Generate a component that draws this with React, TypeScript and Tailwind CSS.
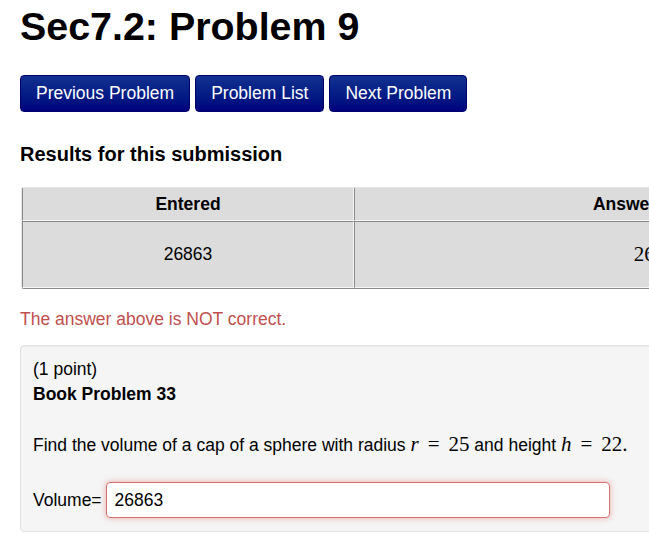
import React from "react";

const NavButton = ({ label }: { label: string }) => (
  <a
    href="#"
    className="flex h-[37px] items-center rounded-[4px] border border-[#00006a] bg-gradient-to-b from-[#14308f] to-[#00007c] px-[15px] text-[17.5px] text-white"
  >
    {label}
  </a>
);

const MathVar = ({ v, n }: { v: string; n: string }) => (
  <span className="font-['Liberation_Serif',serif] text-[21px]">
    <i>{v}</i>
    <span className="mx-[0.43em]">=</span>
    {n}
  </span>
);

export default function App() {
  return (
    <div className="w-full overflow-hidden bg-white text-black font-['Liberation_Sans',Arial,sans-serif]">
      <div className="w-[1000px] pl-5 pt-[5px] pb-4">
        <h1 className="text-[39.4px] font-bold leading-[43px]">Sec7.2: Problem 9</h1>

        <div className="mt-[27px] flex gap-[5px]">
          <NavButton label="Previous Problem" />
          <NavButton label="Problem List" />
          <NavButton label="Next Problem" />
        </div>

        <h2 className="mt-[30px] text-[20px] font-bold leading-[24px]">Results for this submission</h2>

        <table className="ml-px mt-[21px] border-separate border-spacing-0 rounded-[3px] border border-t-[#e4e4e4] border-l-[#e4e4e4] border-r-[#8a8a8a] border-b-[#8a8a8a] text-[17.5px]">
          <thead>
            <tr>
              <th className="h-[33px] w-[332px] border-b border-l border-r border-b-[#f6f6f6] border-l-[#8a8a8a] border-r-[#f6f6f6] bg-[#dcdcdc] p-0 font-bold">
                Entered
              </th>
              <th className="h-[33px] w-[612px] border-b border-l border-r border-b-[#f6f6f6] border-l-[#8a8a8a] border-r-[#f6f6f6] bg-[#dcdcdc] p-0 font-bold">
                Answer Preview
              </th>
            </tr>
          </thead>
          <tbody>
            <tr>
              <td className="h-[67px] border border-t-[#8a8a8a] border-l-[#8a8a8a] border-r-[#f6f6f6] border-b-[#f6f6f6] bg-[#dcdcdc] p-0 text-center">
                26863
              </td>
              <td className="h-[67px] border border-t-[#8a8a8a] border-l-[#8a8a8a] border-r-[#f6f6f6] border-b-[#f6f6f6] bg-[#dcdcdc] p-0 text-center">
                <span className="font-['Liberation_Serif',serif] text-[21px]">26863</span>
              </td>
            </tr>
          </tbody>
        </table>

        <p className="mt-[18px] text-[17.5px] leading-[25px] text-[#c0504d]">The answer above is NOT correct.</p>

        <div className="mt-[13px] w-[900px] rounded-[4px] border border-[#e3e3e3] bg-[#f5f5f5] px-3 pt-[11px] pb-[13px] text-[17.5px] leading-[25px] shadow-[inset_0_1px_1px_rgba(0,0,0,0.05)]">
          <div>(1 point)</div>
          <div className="font-bold">Book Problem 33</div>
          <div className="mt-[25px]">
            Find the volume of a cap of a sphere with radius <MathVar v="r" n="25" /> and height{" "}
            <MathVar v="h" n="22." />
          </div>
          <div className="mt-[24px] flex items-center">
            <span>Volume=</span>
            <input
              readOnly
              value="26863"
              className="ml-1 h-[36px] w-[504px] rounded-[4px] border border-[#d9726f] bg-white px-2 text-[17.5px] text-black shadow-[0_0_6px_rgba(217,83,79,0.45)] outline-none"
            />
          </div>
        </div>
      </div>
    </div>
  );
}
